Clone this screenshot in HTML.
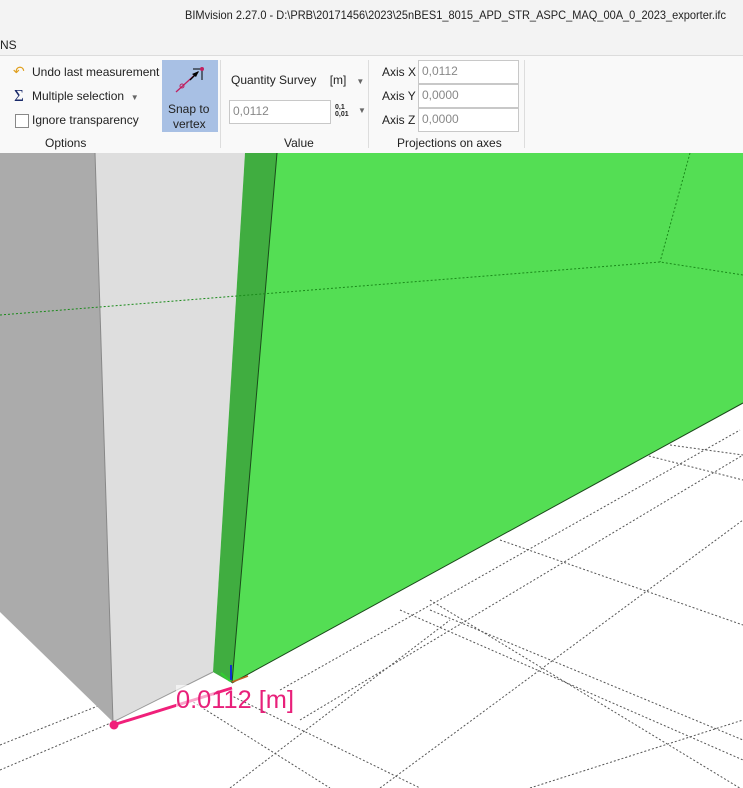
<!DOCTYPE html>
<html><head><meta charset="utf-8"><style>
body{margin:0;width:743px;height:788px;overflow:hidden;background:#fff;font-family:"Liberation Sans",sans-serif;position:relative}
.t{position:absolute;font-size:12px;color:#222;white-space:nowrap}
.box{position:absolute;border:1px solid #c8c8c8;background:#fff;font-size:12px;color:#888;padding-left:3px;box-sizing:border-box;line-height:20px}
</style></head><body>
<div style="position:absolute;left:0;top:0;width:743px;height:55px;background:#f3f3f3"></div>
<svg style="position:absolute;left:0;top:0" width="743" height="30"><text x="185" y="19" textLength="541" lengthAdjust="spacingAndGlyphs" font-family="Liberation Sans,sans-serif" font-size="12" fill="#222">BIMvision 2.27.0 - D:\PRB\20171456\2023\25nBES1_8015_APD_STR_ASPC_MAQ_00A_0_2023_exporter.ifc</text></svg>
<div class="t" style="left:0;top:38px">NS</div>
<div style="position:absolute;left:0;top:55px;width:743px;height:98px;background:#f9f9f9;border-top:1px solid #dcdcdc;border-bottom:1px solid #c8c8c8"></div>
<div class="t" style="left:13px;top:63px;color:#e0a020;font-size:14px">↶</div>
<div class="t" style="left:32px;top:65px">Undo last measurement</div>
<div class="t" style="left:14px;top:86px;font-size:17px;color:#1a2a6a;font-family:'Liberation Serif',serif">Σ</div>
<div class="t" style="left:32px;top:89px">Multiple selection &nbsp;<span style="font-size:8px;color:#666">▼</span></div>
<div style="position:absolute;left:15px;top:114px;width:12px;height:12px;border:1px solid #888;background:#fff"></div>
<div class="t" style="left:32px;top:113px">Ignore transparency</div>
<div class="t" style="left:45px;top:136px">Options</div>
<div style="position:absolute;left:162px;top:60px;width:56px;height:72px;background:#a8c0e4"></div>
<svg style="position:absolute;left:172px;top:64px" width="36" height="32"><line x1="4" y1="28" x2="26" y2="8" stroke="#c02060" stroke-width="1.3"/><circle cx="10" cy="22" r="2" fill="none" stroke="#c02060"/><line x1="18" y1="16" x2="26" y2="8" stroke="#000" stroke-width="1.3"/><polygon points="27,7 20,10 24,13" fill="#000"/><line x1="21" y1="5" x2="30" y2="5" stroke="#000"/><line x1="30" y1="5" x2="30" y2="16" stroke="#000"/><circle cx="30" cy="5" r="2" fill="#c02060"/></svg>
<div class="t" style="left:168px;top:102px">Snap to</div>
<div class="t" style="left:173px;top:117px">vertex</div>
<div style="position:absolute;left:220px;top:60px;width:1px;height:88px;background:#ddd"></div>
<div class="t" style="left:231px;top:73px">Quantity Survey &nbsp;&nbsp; [m] &nbsp;&nbsp;<span style="font-size:8px;color:#666">▼</span></div>
<div class="box" style="left:229px;top:100px;width:102px;height:24px">0,0112</div>
<div class="t" style="left:335px;top:104px;font-size:7px;line-height:7px;font-weight:bold">0,1<br>0,01</div>
<div class="t" style="left:358px;top:106px;font-size:8px;color:#666">▼</div>
<div class="t" style="left:284px;top:136px">Value</div>
<div style="position:absolute;left:368px;top:60px;width:1px;height:88px;background:#ddd"></div>
<div class="t" style="left:382px;top:65px">Axis X</div><div class="box" style="left:418px;top:60px;width:101px;height:24px">0,0112</div>
<div class="t" style="left:382px;top:89px">Axis Y</div><div class="box" style="left:418px;top:84px;width:101px;height:24px">0,0000</div>
<div class="t" style="left:382px;top:113px">Axis Z</div><div class="box" style="left:418px;top:108px;width:101px;height:24px">0,0000</div>
<div class="t" style="left:397px;top:136px">Projections on axes</div>
<div style="position:absolute;left:524px;top:60px;width:1px;height:88px;background:#ddd"></div>
<svg style="position:absolute;left:0;top:153px" width="743" height="635" viewBox="0 153 743 635">
<g stroke="#555" stroke-width="1" stroke-dasharray="2,2" fill="none">
<line x1="0" y1="770" x2="113" y2="722"/><line x1="0" y1="745" x2="113" y2="700"/>
<line x1="190" y1="700" x2="330" y2="788"/><line x1="230" y1="695" x2="420" y2="788"/>
<line x1="280" y1="690" x2="740" y2="430"/><line x1="300" y1="720" x2="743" y2="455"/>
<line x1="380" y1="788" x2="743" y2="520"/><line x1="230" y1="788" x2="450" y2="620"/>
<line x1="430" y1="600" x2="743" y2="790"/><line x1="400" y1="610" x2="743" y2="760"/>
<line x1="430" y1="610" x2="743" y2="740"/><line x1="500" y1="540" x2="743" y2="625"/>
<line x1="645" y1="455" x2="743" y2="480"/><line x1="670" y1="445" x2="743" y2="455"/>
<line x1="530" y1="788" x2="743" y2="720"/>
</g>
<polygon points="0,153 95,153 113,722 0,612" fill="#ababab"/>
<polygon points="95,153 245,153 213,672 113,722" fill="#dedede"/>
<line x1="95" y1="153" x2="113" y2="722" stroke="#888"/>
<line x1="113" y1="722" x2="213" y2="672" stroke="#999"/>
<polygon points="245,153 277,153 232,683 213,672" fill="#40ad40"/>
<polygon points="277,153 743,153 743,403 232,683" fill="#54de54"/>
<line x1="277" y1="153" x2="232" y2="683" stroke="#1a4a1a"/>
<line x1="232" y1="683" x2="743" y2="403" stroke="#1a4a1a"/>
<g stroke="#1a8a1a" stroke-dasharray="2,2" fill="none"><polyline points="0,315 660,262 743,275"/><line x1="690" y1="153" x2="660" y2="262"/></g>
<line x1="231" y1="680" x2="231" y2="665" stroke="#1030d0" stroke-width="2"/>
<line x1="232" y1="682" x2="248" y2="676" stroke="#c06020" stroke-width="1.5"/>
<line x1="230" y1="681" x2="221" y2="673" stroke="#30d030" stroke-width="2"/>
<line x1="113" y1="725" x2="232" y2="688" stroke="#f0207a" stroke-width="3"/>
<circle cx="114" cy="725" r="4.5" fill="#f0207a"/>
<rect x="176" y="685" width="40" height="24" fill="#fff" opacity=".6"/>
<text x="176" y="708" textLength="118" lengthAdjust="spacingAndGlyphs" font-family="Liberation Sans,sans-serif" font-size="25" fill="#e8207a">0.0112 [m]</text>
</svg>
</body></html>
